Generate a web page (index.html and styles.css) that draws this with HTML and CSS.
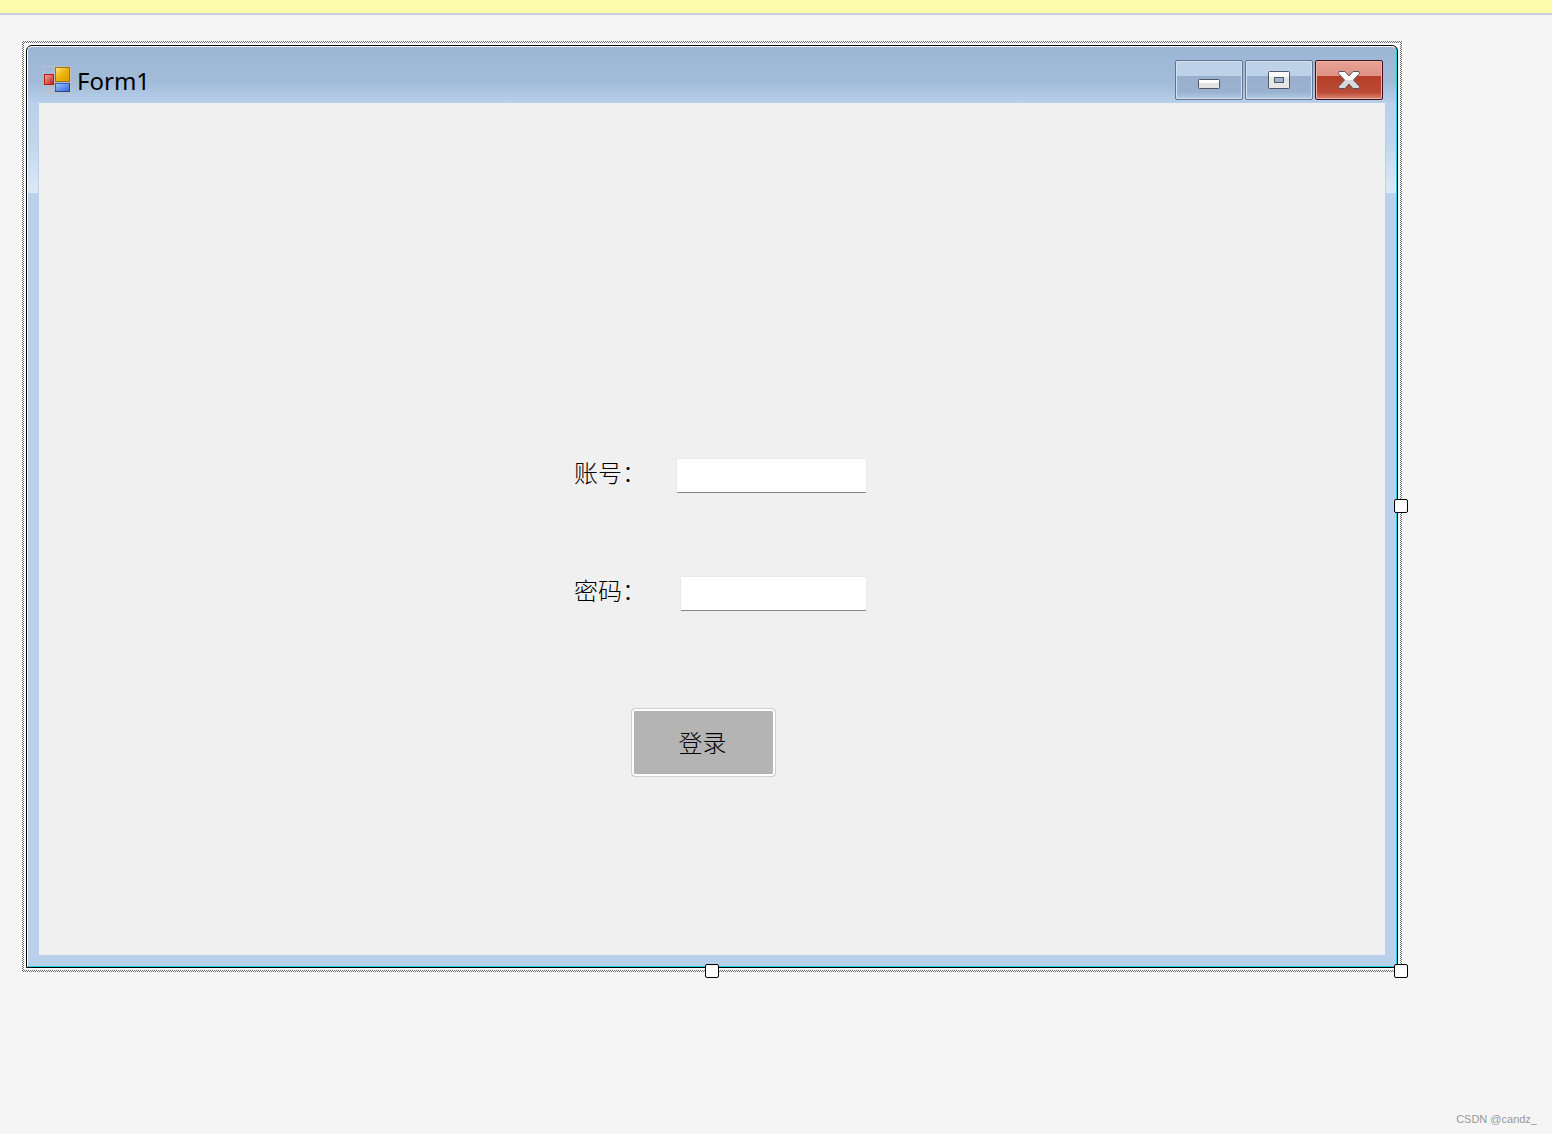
FILE: index.html
```html
<!DOCTYPE html>
<html lang="zh-CN">
<head>
  <meta charset="UTF-8">
  <title>Form1</title>
  <meta name="viewport" content="width=device-width, initial-scale=1">
  <link rel="stylesheet" href="styles.css">
</head>
<body>
  <div class="notice-bar"></div>

  <main class="designer">
    <div class="selection">
      <div class="window">
        <div class="chrome">
          <!-- title bar -->
          <header class="titlebar">
            <svg class="app-icon" width="28" height="28" viewBox="0 0 28 28" aria-hidden="true">
              <defs>
                <linearGradient id="gold" x1="0" y1="0" x2="1" y2="1">
                  <stop offset="0" stop-color="#fbe87c"/><stop offset=".5" stop-color="#ecb30c"/><stop offset="1" stop-color="#dc9a00"/>
                </linearGradient>
                <linearGradient id="red" x1="0" y1="0" x2="1" y2="1">
                  <stop offset="0" stop-color="#f3a9a0"/><stop offset="1" stop-color="#bd1c1c"/>
                </linearGradient>
                <linearGradient id="blue" x1="0" y1="0" x2="1" y2="1">
                  <stop offset="0" stop-color="#9cc4ff"/><stop offset="1" stop-color="#2f66d8"/>
                </linearGradient>
              </defs>
              <path d="M.5 8V.5H12M.5 19v7.5H12M5.500 19v7" fill="none" stroke="#c3bfc1"/>
              <rect x="11.500" y=".5" width="16" height="26" fill="none" stroke="#c3bfc1"/>
              <rect x="12.500" y="1.500" width="14" height="14" fill="url(#gold)" stroke="#9c7412"/>
              <rect x="1.500" y="8.500" width="9" height="10" fill="url(#red)" stroke="#c01c08"/>
              <rect x="12.500" y="17.500" width="14" height="8" fill="url(#blue)" stroke="#3a62b4"/>
              <path d="M12 25.500h15M26.500 17v9" fill="none" stroke="#24448c"/>
            </svg>
            <h1 class="title">Form1</h1>
            <div class="caption-buttons">
              <button type="button" class="caption-btn" aria-label="最小化">
                <svg width="24" height="24" viewBox="0 0 24 24" aria-hidden="true">
                  <rect x="1.500" y="9.500" width="21" height="9" rx="1" fill="#e2e2e2" stroke="#535666"/>
                  <path d="M2 11.500h20" stroke="#fff" stroke-width="3"/>
                </svg>
              </button>
              <button type="button" class="caption-btn" aria-label="最大化">
                <svg width="24" height="24" viewBox="0 0 24 24" aria-hidden="true">
                  <rect x="1.500" y="1.500" width="21" height="17" rx="1" fill="#e6e6e6" stroke="#535666"/>
                  <path d="M2 4.500h20" stroke="#fafafa" stroke-width="5"/>
                  <rect x="7.500" y="7.500" width="9" height="5" fill="#9cb3d0" stroke="#535666"/>
                </svg>
              </button>
              <button type="button" class="caption-btn close" aria-label="关闭">
                <svg width="24" height="24" viewBox="0 0 24 24" aria-hidden="true">
                  <defs>
                    <linearGradient id="cross" x1="0" y1="0" x2="0" y2="1">
                      <stop offset=".5" stop-color="#fff"/><stop offset=".5" stop-color="#d9d9d9"/>
                    </linearGradient>
                  </defs>
                  <path d="M2 1.500h6l4 4.500 4-4.500h6l.5 2-6 6.500 6 6.500-.5 2h-6l-4-4.500-4 4.500h-6l-.5-2 6-6.500-6-6.500z" fill="url(#cross)" stroke="#535666"/>
                </svg>
              </button>
            </div>
          </header>

          <!-- client area -->
          <form class="client">
            <div class="field">
              <label for="account">账号：</label>
              <input type="text" id="account" class="textbox">
            </div>
            <div class="field">
              <label for="password">密码：</label>
              <input type="password" id="password" class="textbox short">
            </div>
            <button type="button" class="login-btn">登录</button>
          </form>
        </div>
      </div>

      <!-- resize handles -->
      <span class="handle right"></span>
      <span class="handle bottom"></span>
      <span class="handle corner"></span>
    </div>
  </main>

  <footer class="watermark">CSDN @candz_</footer>
</body>
</html>
```

FILE: styles.css
```css
* { box-sizing: border-box; }

body {
  margin: 0;
  min-height: 100vh;
  display: flex;
  flex-direction: column;
  background: #f5f5f5;
  color: #000;
  font-family: "Noto Sans", "Noto Sans CJK SC", sans-serif;
}

.notice-bar {
  height: 15px;
  background: #fdfbac;
  border-bottom: 2px solid #cccedb;
}

.designer { padding: 26px 150px 0 22px; }

/* dotted frame around the selected form */
.selection {
  position: relative;
  padding: 4px;
  background:
    linear-gradient(#f8f8f8, #f8f8f8) center / calc(100% - 4px) calc(100% - 4px) no-repeat,
    repeating-conic-gradient(#666 0 25%, #fff 0 50%) 0 0 / 2px 2px;
}

.handle {
  position: absolute;
  width: 14px;
  height: 14px;
  background: #fff;
  border: 1px solid #000;
  border-radius: 2px;
}
.handle.right { right: -6px; top: calc(50% - 8px); }
.handle.bottom { bottom: -6px; left: calc(50% - 7px); }
.handle.corner { right: -6px; bottom: -6px; }

.window {
  border: 1px solid #000;
  border-radius: 6px 6px 0 0;
  background: #000;
}
.chrome {
  padding: 0 11px 11px;
  border: 1px solid;
  border-color: #fff #1cd0ec #1cd0ec #fff;
  border-radius: 5px 5px 0 0;
  background:
    linear-gradient(#9bb7d6, #a2bbd8 36px, #b8d0ea 56px) 0 0 / 100% 56px no-repeat,
    linear-gradient(#b9d1ea, #bfd5ec 40%, #dce9f6) 0 56px / 10px 90px no-repeat,
    linear-gradient(#b9d1ea, #bfd5ec 40%, #dce9f6) 100% 56px / 10px 90px no-repeat,
    #b9d1ea;
}

.titlebar {
  display: flex;
  align-items: flex-start;
  height: 56px;
  padding: 13px 2px 0 4px;
}
.app-icon {
  flex: none;
  margin-top: 6px;
}
.title {
  margin: 0 0 0 6px;
  font-size: 24px;
  font-weight: 400;
  line-height: 42px;
}
.caption-buttons {
  display: flex;
  gap: 2px;
  margin-left: auto;
}
.caption-btn {
  width: 68px;
  height: 40px;
  padding: 3px 0 0;
  display: flex;
  align-items: center;
  justify-content: center;
  border: 1px solid #63748e;
  border-radius: 2px;
  background: linear-gradient(#bdd2e8, #bdd2e8 40%, #98b0cd 40%, #9ab2cf 82%, #b5cde7);
  box-shadow: inset 0 0 0 1px #d2e0f0;
}
.caption-btn.close {
  border-color: #43101f;
  background: linear-gradient(#e5a294, #df9184 40%, #b43f28 40%, #bc4a34 82%, #dc8672);
  box-shadow: inset 0 0 0 1px #e8b4aa;
}

.client {
  min-height: 852px;
  padding: 355px 0 0 535px;
  background: #f0f0f0;
  font-size: 24px;
}
.field {
  display: flex;
  align-items: flex-start;
  justify-content: space-between;
  width: 293px;
  height: 35px;
  margin-bottom: 83px;
}
.field label {
  font-family: "Noto Sans CJK SC", sans-serif;
  font-weight: 300;
  line-height: 28px;
}
.textbox {
  width: 191px;
  height: 35px;
  padding: 4px;
  border: 1px solid #e9e9e9;
  border-bottom-color: #868686;
  border-radius: 2px;
  background: #fff;
  font: inherit;
}
.textbox.short { width: 187px; }

.login-btn {
  display: block;
  width: 145px;
  height: 69px;
  margin: 97px 0 0 57px;
  padding: 0 2px 2px 0;
  border: 1px solid #d0d0d0;
  border-radius: 4px;
  background: #b4b4b4;
  box-shadow: inset 0 0 0 2px #fff;
  color: #000;
  font-family: "Noto Sans CJK SC", sans-serif;
  font-size: 24px;
  font-weight: 300;
}

.watermark {
  margin-top: auto;
  padding: 0 15px 7px;
  color: #999;
  font: 11px/16px "Liberation Sans", sans-serif;
  text-align: right;
}
```
